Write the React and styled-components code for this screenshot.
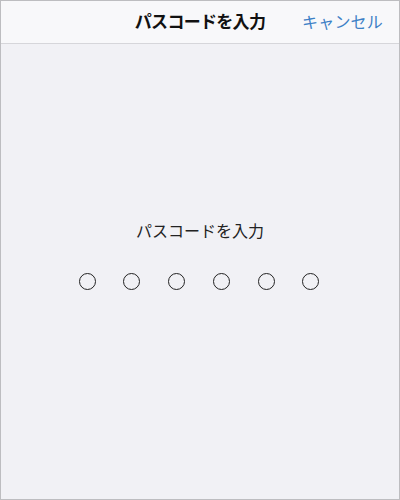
import React from 'react'
import styled, { createGlobalStyle } from 'styled-components';

const GlobalStyle = createGlobalStyle`
    html, body {
        margin:0;
        padding:0;
    }
    body {
        font-family:"Noto Sans CJK JP", "Noto Sans", sans-serif;
        background:#f1f1f5;
    }
`;

const Frame = styled.div`
    width:400px;
    height:500px;
    box-sizing:border-box;
    border:1px solid #bdbdc0;
    background:#f1f1f5;
    display:flex;
    flex-direction:column;
`;

const NavBar = styled.div`
    height:43px;
    box-sizing:border-box;
    padding-bottom:3px;
    flex-shrink:0;
    display:grid;
    grid-template-columns: 1fr auto 1fr;
    align-items:center;
    background:#f8f8fa;
    border-bottom:1px solid #d6d6da;
`;

const Title = styled.div`
    grid-column:2;
    font-size:17px;
    font-weight:700;
    letter-spacing:-0.7px;
    color:#111;
    line-height:24px;
`;

const CancelButton = styled.button`
    grid-column:3;
    justify-self:end;
    margin-right:16px;
    border:none;
    background:none;
    padding:0;
    font-family:inherit;
    font-size:16px;
    line-height:24px;
    letter-spacing:0.2px;
    color:#3d80c6;
    cursor:pointer;
`;

const Body = styled.div`
    flex:1;
    display:flex;
    flex-direction:column;
    align-items:center;
    padding-top:174px;
`;

const Prompt = styled.div`
    font-size:16px;
    letter-spacing:0px;
    color:#222;
    line-height:24px;
`;

const Dots = styled.div`
    display:flex;
    gap:27.8px;
    margin-top:31px;
    padding-right:2px;
`;

const Dot = styled.div`
    width:15px;
    height:15px;
    border-radius:50%;
    border:1.7px solid #222;
    background:${({filled}) => filled ? '#222' : 'transparent'};
`;

const App = () => {
    const entered = 0

    return (
        <Frame>
            <GlobalStyle/>
            <NavBar>
                <Title>パスコードを入力</Title>
                <CancelButton>キャンセル</CancelButton>
            </NavBar>
            <Body>
                <Prompt>パスコードを入力</Prompt>
                <Dots>
                    {
                        [...new Array(6)].map((_,i) => (
                            <Dot key={i} filled={i < entered}/>
                        ))
                    }
                </Dots>
            </Body>
        </Frame>
    )
}

export default App
